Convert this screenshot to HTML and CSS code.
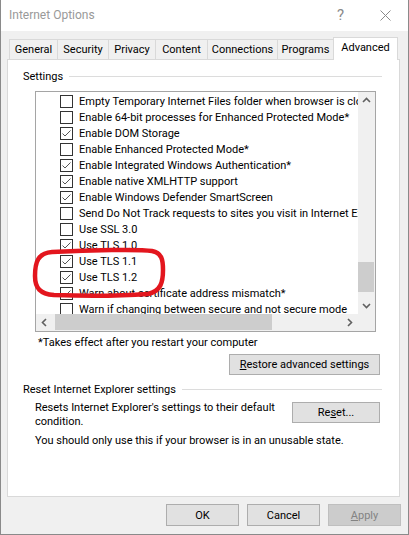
FILE: index.html
```html
<!DOCTYPE html>
<html>
<head>
<meta charset="utf-8">
<link rel="stylesheet" href="styles.css">
</head>
<body>
<div class="window">
  <div class="titlebar">
    <span class="title">Internet Options</span>
    <span class="help">?</span>
    <svg class="close" width="11" height="11" viewBox="0 0 11 11"><path d="M0.5 0.5 L10.5 10.5 M10.5 0.5 L0.5 10.5" stroke="#8a8a8a" stroke-width="1" fill="none"/></svg>
  </div>
  <div class="tabs">
    <div class="tab w-general">General</div>
    <div class="tab w-security">Security</div>
    <div class="tab w-privacy">Privacy</div>
    <div class="tab w-content">Content</div>
    <div class="tab w-connections">Connections</div>
    <div class="tab w-programs">Programs</div>
    <div class="tab selected w-advanced">Advanced</div>
  </div>
  <div class="panel">
    <div class="group-head"><span>Settings</span><span class="rule"></span></div>
    <div class="list-wrap">
      <div class="listbox">
        <div class="list-content">
          <div class="row"><span class="cb"></span><span class="label">Empty Temporary Internet Files folder when browser is closed</span></div>
          <div class="row"><span class="cb"></span><span class="label">Enable 64-bit processes for Enhanced Protected Mode*</span></div>
          <div class="row"><span class="cb"><svg viewBox="0 0 11 11" width="11" height="11"><path d="M1.5 5.5 L4 8 L9.5 2.5" fill="none" stroke="#555" stroke-width="1"/></svg></span><span class="label">Enable DOM Storage</span></div>
          <div class="row"><span class="cb"></span><span class="label">Enable Enhanced Protected Mode*</span></div>
          <div class="row"><span class="cb"><svg viewBox="0 0 11 11" width="11" height="11"><path d="M1.5 5.5 L4 8 L9.5 2.5" fill="none" stroke="#555" stroke-width="1"/></svg></span><span class="label">Enable Integrated Windows Authentication*</span></div>
          <div class="row"><span class="cb"><svg viewBox="0 0 11 11" width="11" height="11"><path d="M1.5 5.5 L4 8 L9.5 2.5" fill="none" stroke="#555" stroke-width="1"/></svg></span><span class="label">Enable native XMLHTTP support</span></div>
          <div class="row"><span class="cb"><svg viewBox="0 0 11 11" width="11" height="11"><path d="M1.5 5.5 L4 8 L9.5 2.5" fill="none" stroke="#555" stroke-width="1"/></svg></span><span class="label">Enable Windows Defender SmartScreen</span></div>
          <div class="row"><span class="cb"></span><span class="label">Send Do Not Track requests to sites you visit in Internet Explorer</span></div>
          <div class="row"><span class="cb"></span><span class="label">Use SSL 3.0</span></div>
          <div class="row"><span class="cb"><svg viewBox="0 0 11 11" width="11" height="11"><path d="M1.5 5.5 L4 8 L9.5 2.5" fill="none" stroke="#555" stroke-width="1"/></svg></span><span class="label">Use TLS 1.0</span></div>
          <div class="row"><span class="cb"><svg viewBox="0 0 11 11" width="11" height="11"><path d="M1.5 5.5 L4 8 L9.5 2.5" fill="none" stroke="#555" stroke-width="1"/></svg></span><span class="label">Use TLS 1.1</span></div>
          <div class="row"><span class="cb"><svg viewBox="0 0 11 11" width="11" height="11"><path d="M1.5 5.5 L4 8 L9.5 2.5" fill="none" stroke="#555" stroke-width="1"/></svg></span><span class="label">Use TLS 1.2</span></div>
          <div class="row"><span class="cb"><svg viewBox="0 0 11 11" width="11" height="11"><path d="M1.5 5.5 L4 8 L9.5 2.5" fill="none" stroke="#555" stroke-width="1"/></svg></span><span class="label">Warn about certificate address mismatch*</span></div>
          <div class="row"><span class="cb"></span><span class="label">Warn if changing between secure and not secure mode</span></div>
        </div>
        <div class="vscroll">
          <div class="sb-btn"><svg width="17" height="17" viewBox="0 0 17 17"><path d="M5 10 L8.5 6.5 L12 10" fill="none" stroke="#606060" stroke-width="1.6"/></svg></div>
          <div class="v-track"><div class="v-thumb"></div></div>
          <div class="sb-btn"><svg width="17" height="17" viewBox="0 0 17 17"><path d="M5 7 L8.5 10.5 L12 7" fill="none" stroke="#606060" stroke-width="1.6"/></svg></div>
        </div>
        <div class="hscroll">
          <div class="sb-btn"><svg width="17" height="17" viewBox="0 0 17 17"><path d="M10 5 L6.5 8.5 L10 12" fill="none" stroke="#606060" stroke-width="1.6"/></svg></div>
          <div class="h-track"><div class="h-thumb"></div></div>
          <div class="sb-btn"><svg width="17" height="17" viewBox="0 0 17 17"><path d="M7 5 L10.5 8.5 L7 12" fill="none" stroke="#606060" stroke-width="1.6"/></svg></div>
        </div>
        <div class="corner"></div>
      </div>
      <svg class="highlight" width="138" height="54" viewBox="0 0 138 54"><path d="M22 6 C60 4 110 3 122 5 C132 7 133 14 133 24 C133 36 131 45 118 48 C90 50 50 50 24 49 C10 48 5 42 5 30 C5 16 8 7 22 6 Z" fill="none" stroke="#e3161e" stroke-width="4.5"/></svg>
    </div>
    <div class="note">*Takes effect after you restart your computer</div>
    <div class="btn-row"><button class="btn restore"><u>R</u>estore advanced settings</button></div>
    <div class="group-head reset-head"><span>Reset Internet Explorer settings</span><span class="rule"></span></div>
    <div class="reset-row">
      <p class="reset-text">Resets Internet Explorer's settings to their default<br>condition.</p>
      <button class="btn reset-btn">Re<u>s</u>et...</button>
    </div>
    <p class="warn">You should only use this if your browser is in an unusable state.</p>
  </div>
  <div class="footer">
    <button class="btn dlg">OK</button>
    <button class="btn dlg">Cancel</button>
    <button class="btn dlg disabled"><u>A</u>pply</button>
  </div>
</div>
</body>
</html>
```
FILE: styles.css
```css
html, body {
  margin: 0;
  padding: 0;
  background: #fff;
}
body {
  font-family: Roboto, "Noto Sans", sans-serif;
  font-size: 11px;
  color: #000;
}
.window {
  width: 409px;
  height: 535px;
  box-sizing: border-box;
  border: 1px solid #8a8a8a;
  border-top: none;
  background: #f0f0f0;
  display: flex;
  flex-direction: column;
}
.titlebar {
  height: 31px;
  flex: none;
  background: #fff;
  display: flex;
  align-items: center;
  padding-left: 8px;
}
.title {
  flex: 1;
  font-size: 12px;
  color: #999;
  margin-top: -1px;
}
.help {
  font-size: 15px;
  color: #8a8a8a;
  margin-right: 36px;
  margin-top: -1px;
}
.close {
  margin-right: 17px;
  display: block;
}
.tabs {
  display: flex;
  align-items: flex-end;
  height: 22px;
  margin-top: 6px;
  padding-left: 8px;
  flex: none;
}
.tab {
  box-sizing: border-box;
  height: 20px;
  border: 1px solid #d9d9d9;
  border-bottom: none;
  margin-right: -1px;
  text-align: center;
  padding-top: 2px;
  line-height: 16px;
  white-space: nowrap;
}
.tab.selected {
  height: 23px;
  background: #fff;
  margin-bottom: -1px;
  position: relative;
  z-index: 1;
}
.w-general { width: 49px; }
.w-security { width: 52px; }
.w-privacy { width: 48px; }
.w-content { width: 53px; }
.w-connections { width: 71px; }
.w-programs { width: 57px; }
.w-advanced { width: 65px; }
.panel {
  margin-left: 6px;
  width: 393px;
  height: 438px;
  box-sizing: border-box;
  border: 1px solid #d9d9d9;
  background: #fff;
  flex: none;
}
.group-head {
  display: flex;
  align-items: center;
  line-height: 15px;
  margin: 9px 17px 0 15px;
  white-space: nowrap;
}
.rule {
  flex: 1;
  height: 1px;
  background: #dcdcdc;
  margin-left: 6px;
}
.list-wrap {
  position: relative;
  margin: 7px 0 0 27px;
  width: 341px;
}
.listbox {
  width: 341px;
  height: 241px;
  box-sizing: border-box;
  border: 1px solid #a5a5a5;
  display: grid;
  grid-template-columns: 1fr 17px;
  grid-template-rows: 1fr 17px;
  background: #fff;
}
.list-content {
  overflow: hidden;
  padding-top: 2px;
}
.row {
  display: flex;
  align-items: flex-start;
  height: 16px;
  padding-left: 24px;
  white-space: nowrap;
}
.cb {
  width: 13px;
  height: 13px;
  box-sizing: border-box;
  border: 1px solid #333;
  background: #fff;
  margin-top: 1px;
  margin-right: 6px;
  flex: none;
}
.cb svg {
  display: block;
}
.label {
  line-height: 16px;
}
.vscroll {
  display: flex;
  flex-direction: column;
  background: #f0f0f0;
}
.hscroll {
  display: flex;
  background: #f0f0f0;
}
.corner {
  background: #f0f0f0;
}
.sb-btn {
  width: 17px;
  height: 17px;
  flex: none;
}
.sb-btn svg {
  display: block;
}
.v-track {
  flex: 1;
}
.v-thumb {
  margin: 153px 1px 0 0;
  height: 30px;
  background: #cdcdcd;
}
.h-track {
  flex: 1;
}
.h-thumb {
  margin: 0 0 0 2px;
  width: 217px;
  height: 16px;
  background: #cdcdcd;
}
.highlight {
  position: absolute;
  left: -5px;
  top: 155px;
}
.note {
  margin: 3px 0 0 30px;
  line-height: 15px;
}
.btn-row {
  display: flex;
  justify-content: flex-end;
  margin: 4px 19px 0 0;
}
.btn {
  box-sizing: border-box;
  height: 21px;
  border: 1px solid #adadad;
  background: #e1e1e1;
  font-family: inherit;
  font-size: 11px;
  color: #000;
  padding: 0;
  margin: 0;
}
.restore {
  width: 151px;
}
.reset-head {
  margin-top: 7px;
}
.reset-row {
  display: flex;
  justify-content: space-between;
  align-items: flex-start;
  margin: 4px 19px 0 27px;
}
.reset-text {
  margin: 0;
  line-height: 14px;
}
.reset-btn {
  width: 88px;
  margin-top: 1px;
}
.warn {
  margin: 5px 0 0 27px;
  line-height: 14px;
}
.footer {
  display: flex;
  justify-content: flex-end;
  gap: 8px;
  margin-top: 7px;
  padding-right: 7px;
}
.dlg {
  width: 73px;
  height: 22px;
}
.disabled {
  background: #cccccc;
  border-color: #bfbfbf;
  color: #838383;
}
```
